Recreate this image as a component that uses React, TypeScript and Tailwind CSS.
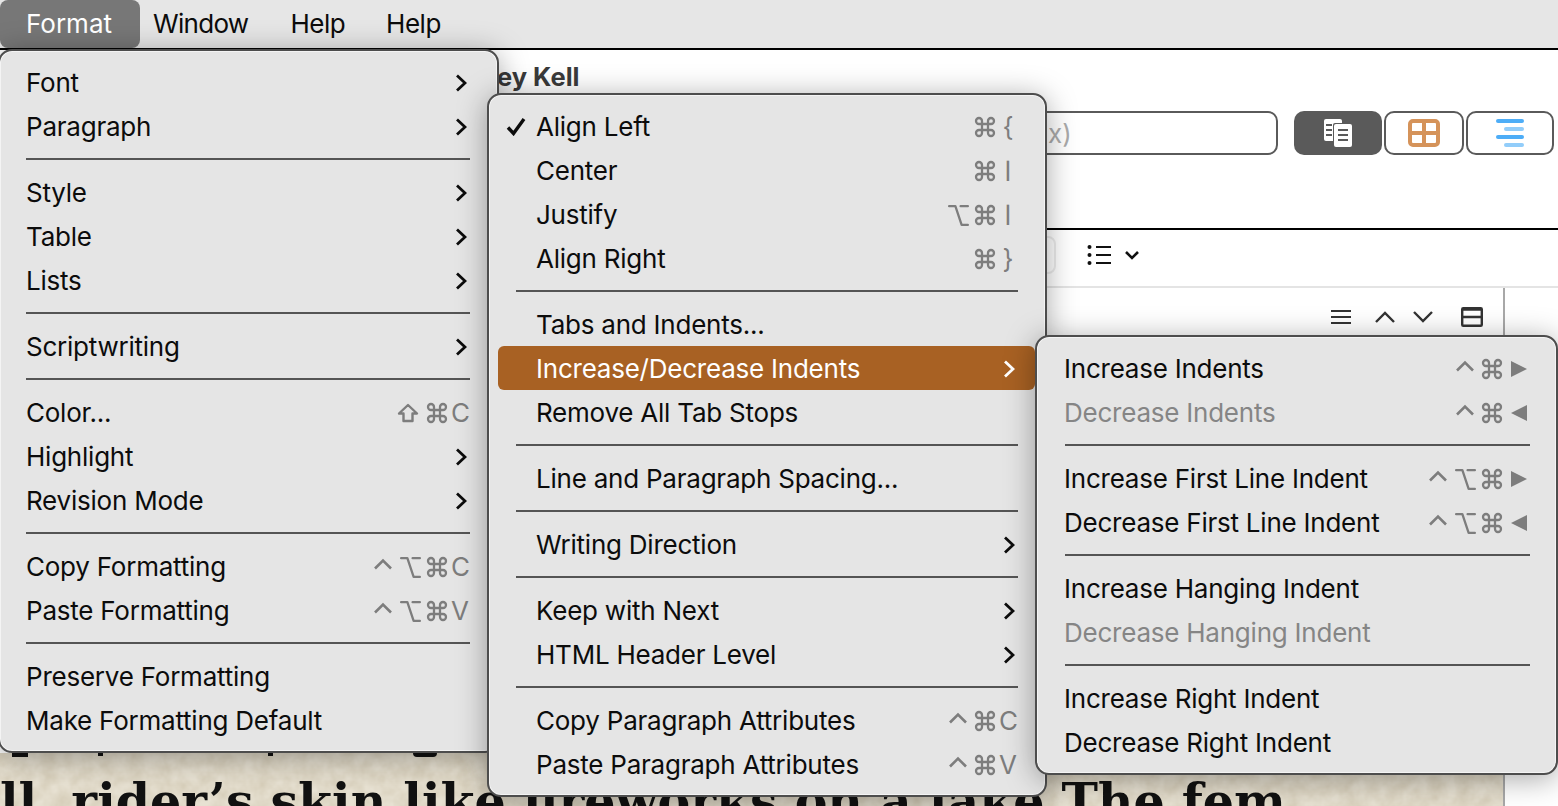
import type { FC } from "react";
import { Command, Option } from "lucide-react";

type Row =
  | { sep: true }
  | {
      sep?: false;
      label: string;
      sub?: boolean;
      check?: boolean;
      active?: boolean;
      disabled?: boolean;
      keys?: string[];
    };

const S: Row = { sep: true };

const formatMenu: Row[] = [
  { label: "Font", sub: true },
  { label: "Paragraph", sub: true },
  S,
  { label: "Style", sub: true },
  { label: "Table", sub: true },
  { label: "Lists", sub: true },
  S,
  { label: "Scriptwriting", sub: true },
  S,
  { label: "Color...", keys: ["shift", "cmd", "C"] },
  { label: "Highlight", sub: true },
  { label: "Revision Mode", sub: true },
  S,
  { label: "Copy Formatting", keys: ["ctrl", "opt", "cmd", "C"] },
  { label: "Paste Formatting", keys: ["ctrl", "opt", "cmd", "V"] },
  S,
  { label: "Preserve Formatting" },
  { label: "Make Formatting Default" },
];

const paragraphMenu: Row[] = [
  { label: "Align Left", check: true, keys: ["cmd", "{"] },
  { label: "Center", keys: ["cmd", "|"] },
  { label: "Justify", keys: ["opt", "cmd", "|"] },
  { label: "Align Right", keys: ["cmd", "}"] },
  S,
  { label: "Tabs and Indents..." },
  { label: "Increase/Decrease Indents", sub: true, active: true },
  { label: "Remove All Tab Stops" },
  S,
  { label: "Line and Paragraph Spacing..." },
  S,
  { label: "Writing Direction", sub: true },
  S,
  { label: "Keep with Next", sub: true },
  { label: "HTML Header Level", sub: true },
  S,
  { label: "Copy Paragraph Attributes", keys: ["ctrl", "cmd", "C"] },
  { label: "Paste Paragraph Attributes", keys: ["ctrl", "cmd", "V"] },
];

const indentMenu: Row[] = [
  { label: "Increase Indents", keys: ["ctrl", "cmd", "right"] },
  { label: "Decrease Indents", disabled: true, keys: ["ctrl", "cmd", "left"] },
  S,
  { label: "Increase First Line Indent", keys: ["ctrl", "opt", "cmd", "right"] },
  { label: "Decrease First Line Indent", keys: ["ctrl", "opt", "cmd", "left"] },
  S,
  { label: "Increase Hanging Indent" },
  { label: "Decrease Hanging Indent", disabled: true },
  S,
  { label: "Increase Right Indent" },
  { label: "Decrease Right Indent" },
];

const Chevron: FC = () => (
  <svg width="12" height="20" viewBox="0 0 12 20" fill="none" className="mr-[2px] translate-y-[1px]">
    <path d="M2 2.5 10 10 2 17.5" stroke="currentColor" strokeWidth="2.8" />
  </svg>
);

const Key: FC<{ k: string; prev?: string }> = ({ k, prev }) => {
  if (k === "ctrl") {
    return (
      <svg width="18" height="12" viewBox="0 0 18 12" fill="none" className="-translate-y-[3px]">
        <path d="M1 10.5 9 2.5l8 8" stroke="currentColor" strokeWidth="2.6" />
      </svg>
    );
  }
  if (k === "shift") {
    return (
      <svg width="22" height="20" viewBox="0 0 22 20" fill="none">
        <path d="M11 2 20 10.5H15.5V18H6.5V10.5H2z" stroke="currentColor" strokeWidth="2.4" strokeLinejoin="round" />
      </svg>
    );
  }
  if (k === "opt") {
    return (
      <span className={`flex w-[21px] justify-center ${prev ? "ml-[8px]" : ""}`}>
        <Option size={25} strokeWidth={2.2} className="-my-1 shrink-0" />
      </span>
    );
  }
  if (k === "cmd") {
    return (
      <span className={`flex w-[20px] justify-center ${prev === "opt" ? "ml-[6px]" : prev ? "ml-[8px]" : ""}`}>
        <Command size={24} strokeWidth={2.3} className="-my-1 shrink-0" />
      </span>
    );
  }
  if (k === "right" || k === "left") {
    return (
      <svg width="18" height="18" viewBox="0 0 18 18" className="ml-[8px]" fill="currentColor">
        <polygon points={k === "right" ? "1,1 17,9 1,17" : "17,1 1,9 17,17"} />
      </svg>
    );
  }
  return <span className={`ml-[4px] w-[18px] text-center ${k === "|" ? "text-[17px] font-bold" : "text-[26px]"}`}>{k}</span>;
};

const Menu: FC<{ rows: Row[]; className: string; indent: string; sepClass: string }> = ({
  rows,
  className,
  indent,
  sepClass,
}) => (
  <div
    className={`absolute rounded-[14px] border-2 border-[#4d4d4d] bg-[#e5e5e5] pb-[9px] pt-[9px] shadow-[0_0_0_1px_#f4f4f4_inset,0_4px_30px_rgba(0,0,0,0.35)] ${className}`}
  >
    {rows.map((row, i) => {
      if (row.sep) {
        return (
          <div key={i} className="flex h-[22px] items-center">
            <div className={`h-[2px] bg-[#555555] ${sepClass}`} />
          </div>
        );
      }
      return (
        <div
          key={i}
          className={`relative flex h-11 items-center justify-between ${
            row.active ? "ml-[9px] mr-[10px] rounded-md bg-[#a86123] pl-[38px] pr-[18px] text-white" : `pr-[28px] ${indent}`
          } ${row.disabled ? "text-[#858585]" : row.active ? "" : "text-[#0c0c0c]"}`}
        >
          {row.check && (
            <svg width="20" height="19" viewBox="0 0 20 19" fill="none" className="absolute left-[17px] top-[13px]">
              <path d="M2 10.5 7.5 16.5 18 2" stroke="#0c0c0c" strokeWidth="3.4" />
            </svg>
          )}
          <span className="whitespace-nowrap text-[26px] tracking-[-0.23px]">{row.label}</span>
          {row.sub && <Chevron />}
          {row.keys && (
            <span className="flex translate-y-[1px] items-center leading-none text-[#7d7d7d]">
              {row.keys.map((k, j) => (
                <Key key={j} k={k} prev={row.keys?.[j - 1]} />
              ))}
            </span>
          )}
        </div>
      );
    })}
  </div>
);

const App: FC = () => (
  <div className="relative h-[806px] w-[1558px] overflow-hidden bg-white font-['Inter',sans-serif]">
    {/* menu bar */}
    <div className="flex h-[50px] items-start border-b-2 border-black bg-[#e6e6e6] text-[26px] text-[#0c0c0c]">
      <div className="flex h-12 w-[140px] items-center rounded-lg bg-[#777777] pb-[2px] pl-[26px] text-white">Format</div>
      <span className="ml-[13px] mt-[4px] tracking-[-0.7px]">Window</span>
      <span className="ml-[42px] mt-[4px] tracking-[-0.5px]">Help</span>
      <span className="ml-[41px] mt-[4px] tracking-[-0.5px]">Help</span>
    </div>

    {/* window header */}
    <div className="flex h-[180px] flex-col border-b-2 border-black bg-white pl-[497px]">
      <div className="mt-[12px] text-[25.5px] font-bold leading-[30px] text-[#3a3a3a]">ey Kell</div>
      <div className="ml-[503px] mt-[19px] flex items-start">
        <div className="flex h-[44px] w-[278px] items-center rounded-[10px] border-2 border-[#5a5a5a] pl-[46px] pt-[1px] text-[26px] text-[#aaaaaa]">
          x)
        </div>
        <div className="ml-4 flex h-[44px] w-[88px] items-center justify-center rounded-[10px] bg-[#5a5a5a]">
          <svg width="28" height="28" viewBox="0 0 28 28">
            <rect x="0" y="0" width="18" height="22" rx="2" fill="white" />
            <path d="M2 6h6M2 11h6M2 16h6" stroke="#5a5a5a" strokeWidth="2" />
            <rect x="9" y="4" width="19" height="24" rx="2" fill="#5a5a5a" />
            <rect x="10" y="5" width="18" height="23" rx="2" fill="white" />
            <path d="M14 11h10M14 16h10M14 21h10" stroke="#5a5a5a" strokeWidth="2" />
          </svg>
        </div>
        <div className="ml-[2px] flex h-[44px] w-[80px] items-center justify-center rounded-[10px] border-2 border-[#5a5a5a]">
          <svg width="32" height="28" viewBox="0 0 32 28" fill="none">
            <rect x="2" y="2" width="28" height="24" rx="3" stroke="#d5935a" strokeWidth="4" />
            <path d="M16 2v24M2 14h28" stroke="#d5935a" strokeWidth="4" />
          </svg>
        </div>
        <div className="ml-[2px] flex h-[44px] w-[88px] items-center justify-center rounded-[10px] border-2 border-[#5a5a5a]">
          <svg width="28" height="28" viewBox="0 0 28 28">
            <rect y="0" width="28" height="4" rx="2" fill="#4dadf7" />
            <rect x="8" y="8" width="20" height="4" rx="2" fill="#92cdfa" />
            <rect y="16" width="28" height="4" rx="2" fill="#4dadf7" />
            <rect x="8" y="24" width="20" height="4" rx="2" fill="#92cdfa" />
          </svg>
        </div>
      </div>
    </div>

    {/* format bar */}
    <div className="flex h-[58px] items-center border-b-2 border-[#e4e4e4] bg-white pb-[6px] pl-[1000px]">
      <div className="h-[38px] w-[56px] rounded-lg border-2 border-[#ececec]" />
      <svg width="24" height="22" viewBox="0 0 24 22" fill="none" className="ml-[31px]">
        <circle cx="2.5" cy="3" r="2" fill="#111" />
        <circle cx="2.5" cy="11" r="2" fill="#111" />
        <circle cx="2.5" cy="19" r="2" fill="#111" />
        <path d="M9 3h15M9 11h15M9 19h15" stroke="#111" strokeWidth="2" />
      </svg>
      <svg width="16" height="10" viewBox="0 0 16 10" fill="none" className="ml-[13px]">
        <path d="M2 2l6 6 6-6" stroke="#111" strokeWidth="2.6" />
      </svg>
    </div>

    {/* document area */}
    <div className="flex h-[518px]">
      <div className="flex w-[1505px] flex-col border-r-2 border-[#a8a8a8] bg-white">
        <div className="flex items-center pl-[1331px] pt-[19px]">
          <svg width="20" height="14" viewBox="0 0 20 14" stroke="#333" strokeWidth="2">
            <path d="M0 1h20M0 7h20M0 13h20" />
          </svg>
          <svg width="20" height="12" viewBox="0 0 20 12" fill="none" stroke="#333" strokeWidth="2.4" className="ml-[24px]">
            <path d="M1 11l9-9 9 9" />
          </svg>
          <svg width="20" height="12" viewBox="0 0 20 12" fill="none" stroke="#333" strokeWidth="2.4" className="ml-[18px]">
            <path d="M1 1l9 9 9-9" />
          </svg>
          <svg width="22" height="20" viewBox="0 0 22 20" fill="none" stroke="#333" strokeWidth="2.4" className="ml-[28px]">
            <rect x="1.2" y="1.2" width="19.6" height="17.6" rx="1" />
            <path d="M1 10h20M1 2.5h20" />
          </svg>
        </div>
        <div className="relative mt-auto h-[53px] overflow-hidden bg-[#e7e1d2]">
          {/* parchment texture */}
          <svg className="absolute inset-0 h-full w-full" aria-hidden="true">
            <filter id="paper">
              <feTurbulence type="fractalNoise" baseFrequency="0.07" numOctaves="3" seed="4" />
              <feColorMatrix values="0 0 0 0 0.55  0 0 0 0 0.48  0 0 0 0 0.34  0.7 0 0 0 -0.16" />
            </filter>
            <rect width="100%" height="100%" filter="url(#paper)" />
          </svg>
          {/* descenders of the line above */}
          <span className="absolute left-[12px] top-0 h-[4px] w-[16px] bg-[#111111]" />
          <span className="absolute left-[98px] top-0 h-[3px] w-[5px] bg-[#111111]" />
          <span className="absolute left-[268px] top-0 h-[3px] w-[5px] bg-[#111111]" />
          <span className="absolute left-[413px] top-0 h-[4px] w-[24px] rounded-b-full bg-[#111111]" />
          <div className="relative mt-[13px] whitespace-nowrap font-['DejaVu_Serif',serif] text-[49px] font-bold leading-[70px] text-[#111111]">
            ll. rider’s skin like fireworks on a lake The fem
          </div>
        </div>
      </div>
    </div>

    <Menu rows={formatMenu} className="left-[-2px] top-[49px] w-[501px]" indent="pl-[26px]" sepClass="ml-[26px] w-[444px]" />
    <Menu rows={paragraphMenu} className="left-[487px] top-[93px] w-[560px]" indent="pl-[47px]" sepClass="ml-[27px] w-[502px]" />
    <Menu rows={indentMenu} className="left-[1035px] top-[335px] w-[523px]" indent="pl-[27px]" sepClass="ml-[28px] w-[465px]" />
  </div>
);

export default App;
